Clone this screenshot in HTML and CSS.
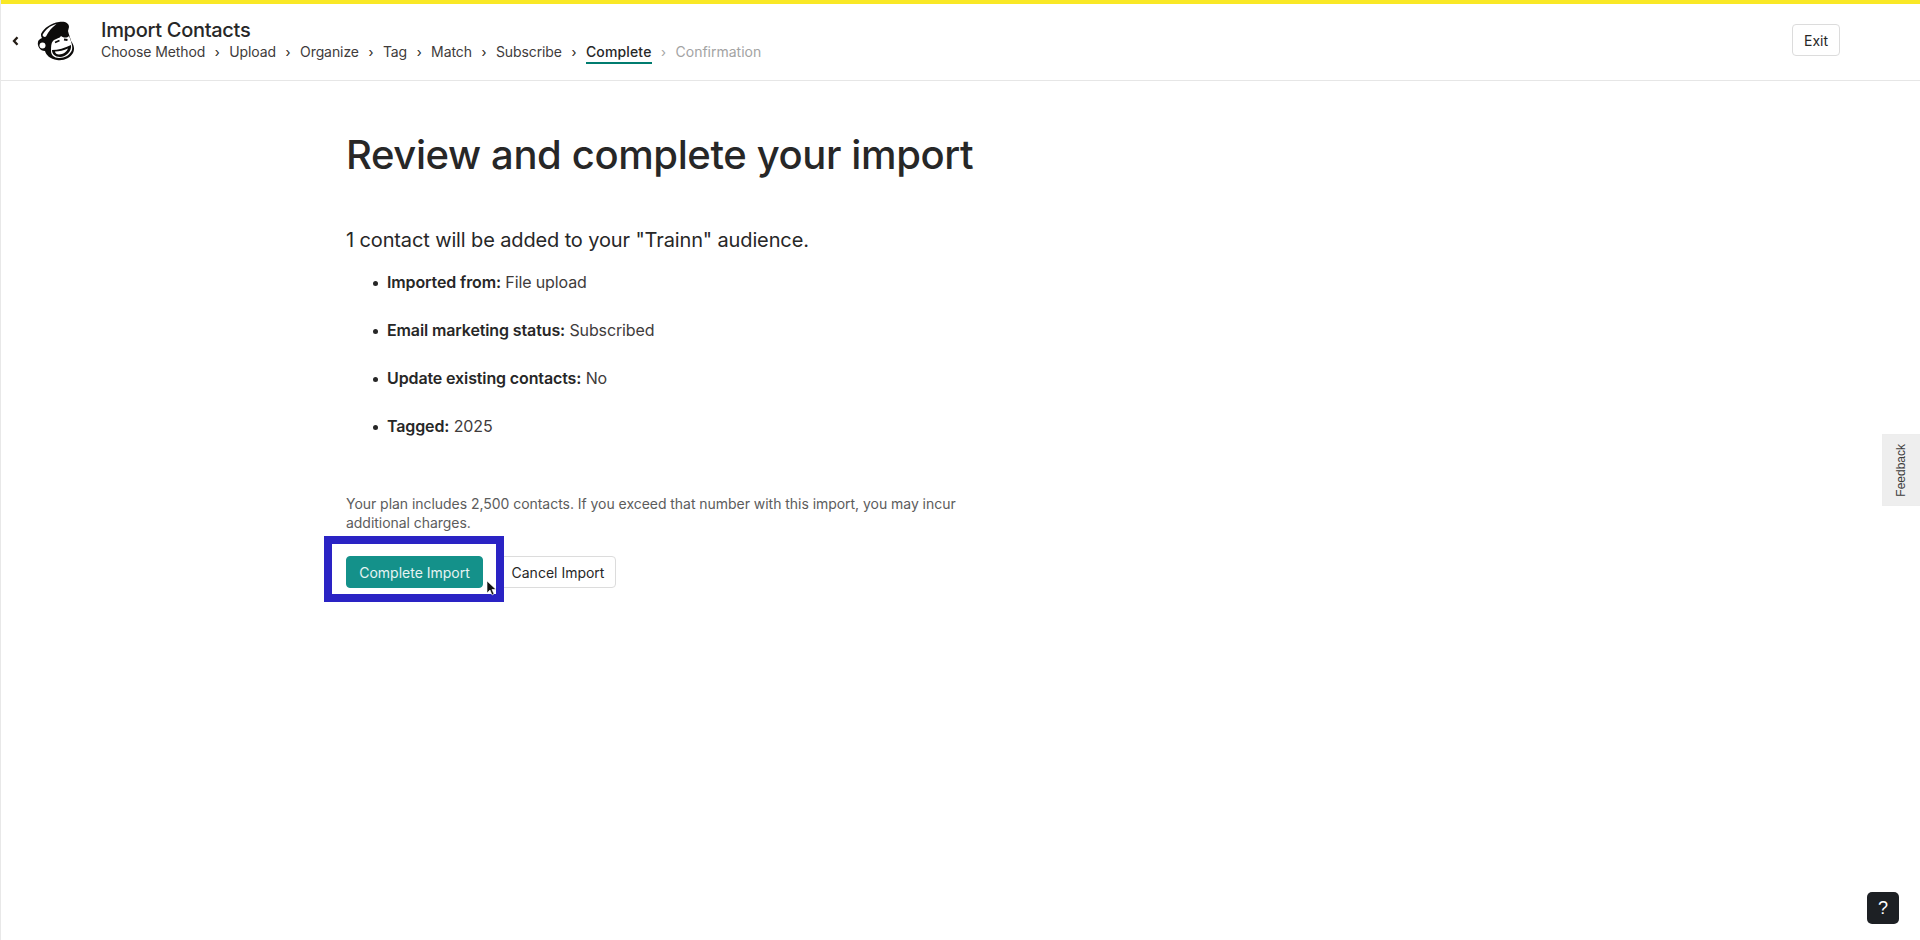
FILE: index.html
```html
<!DOCTYPE html>
<html lang="en">
<head>
<meta charset="utf-8">
<title>Import Contacts</title>
<link rel="stylesheet" href="styles.css">
</head>
<body>
<header class="topbar">
  <div class="brand">
    <svg class="back" width="7" height="10" viewBox="0 0 7 10"><path d="M5.500 1.200 2 5l3.500 3.800" fill="none" stroke="#241c15" stroke-width="2.300"/></svg>
    <svg class="logo" width="38" height="40" viewBox="0 0 38 40">
      <path d="M4 13C7 7 14 2 22 1c6-1 10 1 10 5l-1 4c1 4 2 6 3 10 3 4 4 8 2 12-3 5-9 8-16 7-7-1-11-5-12-9-5 0-8-5-7-9 0-2 2-3 4-4-1-1-1-3-1-4Z" fill="#0d0c0b"/>
      <path d="M5.500 14C8 9 13 4.500 19.500 3c-4 3-8 7-10.500 12.500-1 1-3 .5-3.500-1.500Z" fill="#fff"/>
      <circle cx="5.500" cy="24.500" r="3" fill="#fff"/>
      <path d="M16 20c3-3 6-2 8-5 3 2 6 2 8 0 2 5 4 10 3 14-2 5-7 8-13 8-5 0-8-3-8-7 0-4 0-8 2-10Z" fill="#fff"/>
      <path d="M18 21.500l4.500-2M27 18.500l3.500.5" stroke="#0d0c0b" stroke-width="1.800" fill="none"/>
      <path d="M15 29c6 0 13-2 19-5 1 6-5 12-11 12-5 0-8-3-8-7Z" fill="#0d0c0b"/>
      <path d="M18 30.500c4 0 9-1 13-3-1 3-5 6-9 6-2 0-4-1-4-3Z" fill="#fff"/>
    </svg>
  </div>
  <div class="heading">
    <div class="title">Import Contacts</div>
    <nav class="steps">
      <span class="step">Choose Method</span><span class="sep">›</span>
      <span class="step">Upload</span><span class="sep">›</span>
      <span class="step">Organize</span><span class="sep">›</span>
      <span class="step">Tag</span><span class="sep">›</span>
      <span class="step">Match</span><span class="sep">›</span>
      <span class="step">Subscribe</span><span class="sep">›</span>
      <span class="step current">Complete</span><span class="sep muted">›</span>
      <span class="step muted">Confirmation</span>
    </nav>
  </div>
  <button class="btn exit">Exit</button>
</header>
<main class="content">
  <h1>Review and complete your import</h1>
  <p class="lead">1 contact will be added to your "Trainn" audience.</p>
  <ul class="summary">
    <li><b>Imported from:</b> File upload</li>
    <li><b>Email marketing status:</b> Subscribed</li>
    <li><b>Update existing contacts:</b> No</li>
    <li><b>Tagged:</b> 2025</li>
  </ul>
  <p class="note">Your plan includes 2,500 contacts. If you exceed that number with this import, you may incur additional charges.</p>
  <div class="actions">
    <div class="highlight"></div>
    <button class="btn primary">Complete Import</button>
    <button class="btn cancel">Cancel Import</button>
    <svg class="cursor" width="10" height="16" viewBox="0 0 10 16"><path d="M1 1v12l3-3 2 5 2-1-2-4.500h4Z" fill="#111" stroke="#fff" stroke-width=".6"/></svg>
  </div>
</main>
<button class="feedback"><span>Feedback</span></button>
<button class="help">?</button>
</body>
</html>
```
FILE: styles.css
```css
* { box-sizing: border-box; }
html, body { height: 100%; }
body {
  margin: 0;
  background: #fff;
  color: #272727;
  font-family: Inter, "Open Sans", sans-serif;
  border-left: 1px solid #e8e8e8;
  overflow: hidden;
}
.topbar {
  display: flex;
  align-items: flex-start;
  height: 81px;
  border-top: 4px solid #f9e826;
  border-bottom: 1px solid #e6e6e6;
  background: #fff;
}
.brand {
  display: flex;
  align-items: center;
  width: 100px;
  height: 74px;
  padding-left: 11px;
}
.logo { margin-left: 18px; }
.heading { flex: 1; padding-top: 14px; }
.title {
  font-size: 20px;
  line-height: 24px;
  font-weight: 500;
  letter-spacing: -.3px;
}
.steps {
  display: flex;
  align-items: center;
  font-size: 14px;
  line-height: 20px;
  color: #403b3b;
  letter-spacing: -.09px;
}
.step { padding-bottom: 2px; }
.sep { width: 24px; text-align: center; color: #241c15; font-size: 13px; padding-bottom: 2px; }
.current { font-weight: 500; color: #272727; border-bottom: 2px solid #007c6f; padding-bottom: 0; letter-spacing: .15px; }
.muted { color: #a3a3a3; letter-spacing: 0; }
.btn {
  font-family: inherit;
  font-size: 14px;
  height: 32px;
  border-radius: 4px;
  border: 1px solid #dcdcdc;
  background: #fff;
  color: #272727;
  padding: 0 12px;
  cursor: pointer;
}
.exit { margin: 20px 80px 0 0; width: 48px; padding: 0; }
.content { width: 627px; margin-left: 345px; }
h1 {
  margin: 0;
  padding-top: 48px;
  font-size: 40px;
  line-height: 52px;
  font-weight: 500;
  letter-spacing: -.39px;
  white-space: nowrap;
}
.lead {
  margin: 45px 0 0;
  font-size: 20px;
  line-height: 28px;
  letter-spacing: -.13px;
  white-space: nowrap;
}
.summary {
  list-style: none;
  margin: 16px 0 0;
  padding: 0 0 0 41px;
  font-size: 16px;
  line-height: 24px;
  color: #403b3b;
  letter-spacing: -.12px;
}
.summary li { margin-bottom: 24px; }
.summary li::before {
  content: "";
  display: inline-block;
  width: 5px;
  height: 5px;
  margin: 0 9px 2px -14px;
  border-radius: 50%;
  background: #272727;
}
.summary b { font-weight: 600; color: #272727; }
.note {
  margin: 56px 0 0;
  font-size: 14px;
  line-height: 19px;
  color: #5c5c5c;
  letter-spacing: -.04px;
}
.actions {
  position: relative;
  display: flex;
  gap: 18px;
  margin-top: 24px;
}
.highlight {
  position: absolute;
  left: -22px;
  top: -20px;
  width: 180px;
  height: 66px;
  border: 8px solid #2a23c4;
}
.primary {
  position: relative;
  width: 137px;
  background: #14918a;
  border-color: #14918a;
  color: #e6f4f3;
  padding: 0;
}
.cancel { width: 116px; padding: 0; margin-left: -1px; }
.cursor { position: absolute; left: 140px; top: 24px; }
.feedback {
  position: fixed;
  right: 0;
  top: 434px;
  width: 38px;
  height: 72px;
  padding: 0 2px 0 0;
  display: flex;
  align-items: center;
  justify-content: center;
  border: 1px solid #ededed;
  border-right: 0;
  background: #eeeeee;
  color: #3c3c3c;
  font-family: "Liberation Sans", sans-serif;
  font-size: 12px;
}
.feedback span { writing-mode: vertical-rl; transform: rotate(180deg); }
.help {
  position: fixed;
  right: 21px;
  bottom: 16px;
  width: 32px;
  height: 32px;
  padding: 0;
  border: 0;
  border-radius: 5px;
  background: #1d2024;
  color: #fff;
  font-family: "Liberation Sans", sans-serif;
  font-size: 18px;
  font-weight: 400;
}
```
